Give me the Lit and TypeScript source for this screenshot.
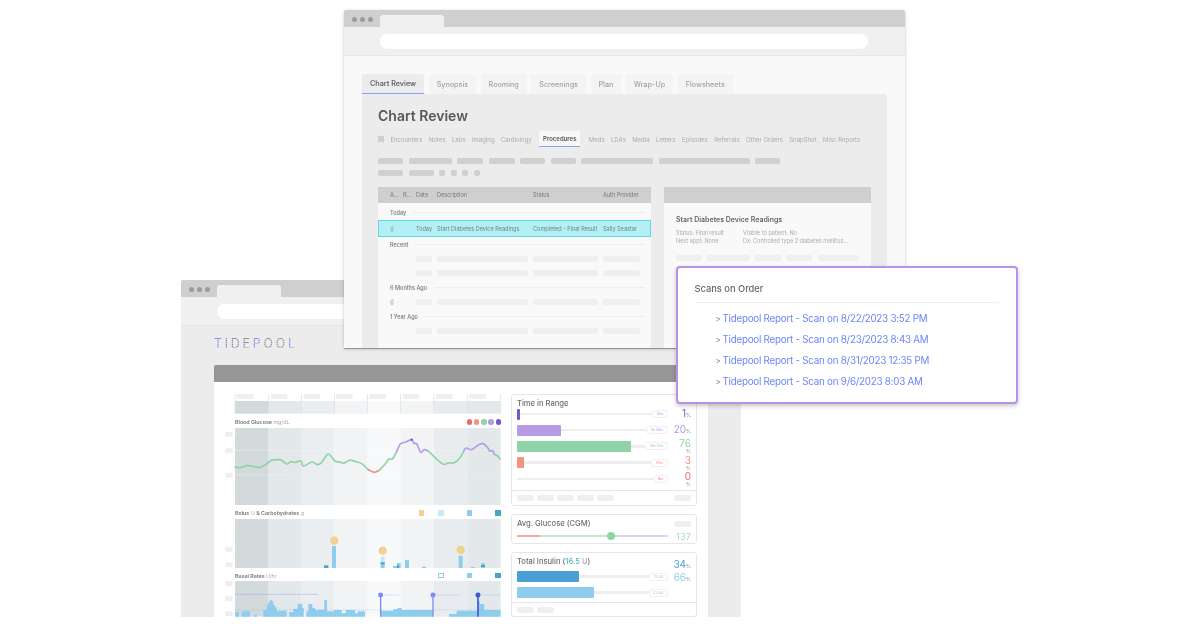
import { LitElement, html, css, svg } from 'lit';
import { customElement } from 'lit/decorators.js';

type Pt = [number, number];
type Pt3 = [number, number, number];

// chart svgs use the same units throughout: 3 units per screen pixel
const COLS = [60, 161, 260, 359, 458, 557, 657, 757, 857];
const SHADES = ['#d3dadc', '#e3e8eb', '#ebeef1', '#f1f3f5', '#f8f9fb', '#f1f3f5', '#e8ecef', '#e3e8eb'];

const GLUCOSE: { color: string; pts: Pt[] }[] = [
  {
    color: '#8fd4a8',
    pts: [[60, 246], [75, 248], [95, 242], [115, 244], [135, 247], [150, 240], [170, 226], [190, 224], [200, 226], [215, 237], [228, 230], [240, 232], [258, 228], [264, 243], [280, 236], [292, 231], [308, 239], [320, 232], [338, 208], [350, 216], [360, 228], [378, 232], [388, 234], [405, 225], [420, 229], [440, 236], [460, 254]],
  },
  { color: '#f4917f', pts: [[460, 254], [478, 262], [494, 255]] },
  { color: '#8fd4a8', pts: [[494, 255], [510, 238], [522, 222], [532, 222], [545, 200]] },
  { color: '#b79be5', pts: [[545, 200], [556, 177], [570, 172], [590, 164], [596, 174], [606, 178], [617, 202], [628, 194], [640, 198]] },
  { color: '#8fd4a8', pts: [[640, 198], [665, 222], [685, 238], [700, 234], [718, 233], [735, 218], [748, 195]] },
  { color: '#b79be5', pts: [[748, 195], [754, 189], [770, 194], [790, 180], [803, 176], [815, 184], [825, 198], [833, 197], [838, 208]] },
  { color: '#8fd4a8', pts: [[838, 208], [848, 213], [855, 222]] },
];

// x, y, w, h, colour
const BOLUS: [number, number, number, number, string][] = [
  [327, 181, 13, 8, '#48a9bd'],
  [351, 123, 12, 66, '#8fcdee'],
  [497, 155, 12, 17, '#c5ecf6'],
  [497, 172, 12, 17, '#8fcdee'],
  [497, 172, 12, 6, '#48a9bd'],
  [534, 183, 12, 6, '#8fcdee'],
  [546, 174, 11, 15, '#8fcdee'],
  [546, 180, 6, 9, '#48a9bd'],
  [570, 165, 12, 24, '#8fcdee'],
  [621, 185, 12, 4, '#8fcdee'],
  [731, 152, 12, 37, '#8fcdee'],
  [768, 186, 12, 3, '#8fcdee'],
  [798, 174, 12, 15, '#8fcdee'],
  [798, 180, 12, 6, '#48a9bd'],
];

// x start, x end, top of the basal step
const BASAL: Pt3[] = [
  [60, 72, 323], [80, 105, 320], [118, 126, 330], [145, 155, 316], [155, 160, 300], [160, 165, 292], [165, 170, 285], [170, 175, 290], [175, 180, 300], [180, 185, 308], [185, 215, 318],
  [222, 235, 322], [235, 248, 312], [248, 262, 297], [262, 266, 310], [274, 280, 320], [280, 292, 298], [292, 300, 310], [300, 328, 315], [328, 336, 286], [336, 358, 320],
  [358, 380, 316], [380, 392, 326], [392, 420, 316], [420, 428, 326], [428, 450, 320],
  [497, 535, 318], [535, 548, 314], [548, 560, 310], [560, 654, 316],
  [702, 725, 328], [725, 789, 318], [789, 795, 290], [795, 808, 298], [808, 857, 316],
];

const smooth = (p: Pt[]) => {
  let d = `M${p[0][0]} ${p[0][1]}`;
  for (let i = 0; i < p.length - 1; i++) {
    const a = p[Math.max(i - 1, 0)];
    const b = p[i];
    const c = p[i + 1];
    const e = p[Math.min(i + 2, p.length - 1)];
    d += `C${b[0] + (c[0] - a[0]) / 6} ${b[1] + (c[1] - a[1]) / 6} ${c[0] - (e[0] - b[0]) / 6} ${c[1] - (e[1] - b[1]) / 6} ${c[0]} ${c[1]}`;
  }
  return d;
};

// one path, so neighbouring steps don't leave hairline seams
const basalPath = () => {
  let d = '';
  let lastEnd = -1;
  BASAL.forEach(([a, b, y]) => {
    if (a !== lastEnd) d += `${lastEnd < 0 ? '' : `V336Z`}M${a} 336`;
    d += `V${y}H${b}`;
    lastEnd = b;
  });
  return d + 'V336Z';
};

const shades = (y: number, h: number) =>
  SHADES.map((fill, i) => svg`<rect x=${COLS[i]} y=${y} width=${COLS[i + 1] - COLS[i]} height=${h} fill=${fill} />`);

const axis = (ys: number[]) =>
  ys.map(y => svg`<rect x="30" y=${y} width="23" height="15" rx="3" fill="#efefef" />`);

const TIME_ROWS = [
  { fill: 3, color: '#7a55c9', pill: '10m', pillColor: '#b79be5', value: '1', valueColor: '#7a55c9', wrap: false },
  { fill: 44, color: '#b79be5', pill: '4h 50m', pillColor: '#b79be5', value: '20', valueColor: '#b79be5', wrap: false },
  { fill: 114, color: '#8fd4a8', pill: '18h 15m', pillColor: '#8fd4a8', value: '76', valueColor: '#8fd4a8', wrap: true },
  { fill: 7, color: '#f4917f', pill: '45m', pillColor: '#f4917f', value: '3', valueColor: '#f4917f', wrap: true },
  { fill: 0, color: '#f06a6a', pill: '0m', pillColor: '#f06a6a', value: '0', valueColor: '#f06a6a', wrap: true },
];

const TABS = ['Chart Review', 'Synopsis', 'Rooming', 'Screenings', 'Plan', 'Wrap-Up', 'Flowsheets'];
const SUBTABS = ['Encounters', 'Notes', 'Labs', 'Imaging', 'Cardiology', 'Procedures', 'Meds', 'LDAs', 'Media', 'Letters', 'Episodes', 'Referrals', 'Other Orders', 'SnapShot', 'Misc Reports'];
const SCANS = ['8/22/2023 3:52 PM', '8/23/2023 8:43 AM', '8/31/2023 12:35 PM', '9/6/2023 8:03 AM'];
const LOGO: [string, string][] = [['T', 'b'], ['I', 'g'], ['D', 'g'], ['E', 'g'], ['P', 'b'], ['O', 'g'], ['O', 'g'], ['L', 'b']];

@customElement('app-root')
export class AppRoot extends LitElement {
  private chrome() {
    return html`
      <div class="titlebar">
        <span class="dots"><i></i><i></i><i></i></span>
        <span class="wintab"></span>
      </div>
      <div class="addressbar"><span class="pill"></span></div>
    `;
  }

  private skeletons(widths: number[]) {
    return widths.map(w => html`<span class="sk" style="width:${w}px"></span>`);
  }

  private clip() {
    return html`<svg class="clip" viewBox="0 0 4 6" width="4" height="6">
      <path d="M1 1.6v2.9a1 1 0 0 0 2 0V1.4a.8.8 0 0 0-1.6 0" fill="none" stroke="#8a9599" stroke-width=".6" />
    </svg>`;
  }

  private skRow(clip = false) {
    return html`<div class="trow">
      <span class="c1">${clip ? this.clip() : ''}</span><span></span>
      <span class="sk light"></span><span class="sk light"></span><span class="sk light"></span><span class="sk light"></span>
    </div>`;
  }

  private frontWindow() {
    return html`
      <section class="win front">
        ${this.chrome()}
        <div class="front-body">
          <nav class="tabs">
            ${TABS.map((t, i) => html`<span class="tab ${i === 0 ? 'on' : ''}">${t}</span>`)}
          </nav>
          <div class="panel">
            <h1>Chart Review</h1>
            <div class="subtabs">
              <svg class="bookmark" viewBox="0 0 6 7" width="6" height="7"><path d="M0 0h6v7L3 5.2 0 7z" fill="#cfcfcf" /></svg>
              ${SUBTABS.map(t => html`<span class="subtab ${t === 'Procedures' ? 'on' : ''}">${t}</span>`)}
            </div>
            <div class="skrow">${this.skeletons([25, 43, 26, 26, 25, 25, 72, 91, 25])}</div>
            <div class="skrow second">
              ${this.skeletons([25, 25])}
              <span class="sk dot"></span><span class="sk dot"></span><span class="sk dot"></span><span class="sk dot"></span>
            </div>
            <div class="split">
              <div class="table">
                <div class="thead trow">
                  <span>A...</span><span>R...</span><span>Date</span><span>Description</span><span>Status</span><span>Auth Provider</span>
                </div>
                <div class="tbody">
                  <div class="group">Today</div>
                  <div class="trow selected">
                    <span class="c1">${this.clip()}</span><span></span>
                    <span>Today</span><span>Start Diabetes Device Readings</span><span>Completed - Final Result</span><span>Sally Seastar</span>
                  </div>
                  <div class="group">Recent</div>
                  ${this.skRow()} ${this.skRow()}
                  <div class="group">6 Months Ago</div>
                  ${this.skRow(true)}
                  <div class="group">1 Year Ago</div>
                  ${this.skRow()}
                </div>
              </div>
              <aside class="detail">
                <div class="detail-head"></div>
                <div class="detail-body">
                  <h2>Start Diabetes Device Readings</h2>
                  <div class="facts">
                    <span>Status: Final result</span><span>Visible to patient: No</span>
                    <span>Next appt: None</span><span>Dx: Controlled type 2 diabetes mellitus...</span>
                  </div>
                  <div class="skrow">${this.skeletons([26, 43, 26, 26, 42])}</div>
                </div>
              </aside>
            </div>
          </div>
        </div>
      </section>
    `;
  }

  private glucoseChart() {
    return html`<svg class="chart" viewBox="30 129 827 232" width="275.67" height="77.33">
      ${shades(129, 232)}
      ${axis([140, 190, 263])}
      <line x1="60" x2="857" y1="196" y2="196" stroke="#fff" stroke-width="1.5" stroke-dasharray="3 3" />
      <line x1="60" x2="857" y1="270" y2="270" stroke="#fff" stroke-width="1.5" stroke-dasharray="3 3" />
      ${GLUCOSE.map(s => svg`<path d=${smooth(s.pts)} fill="none" stroke=${s.color} stroke-width="5" stroke-linecap="round" />`)}
      <circle cx="590" cy="164" r="3.5" fill="#7a55c9" />
    </svg>`;
  }

  private bolusChart() {
    return html`<svg class="chart" viewBox="30 42 827 147" width="275.67" height="49">
      ${shades(42, 147)}
      ${axis([125, 172])}
      ${BOLUS.map(([x, y, w, h, fill]) => svg`<rect x=${x} y=${y} width=${w} height=${h} fill=${fill} />`)}
      ${[[358, 107], [503, 137], [737, 135]].map(([cx, cy]) => svg`<circle cx=${cx} cy=${cy} r="12.5" fill="#f2d08f" />`)}
    </svg>`;
  }

  private basalChart() {
    const markers = [
      { x: 497, end: 553, color: '#7b8ff5', w: 4 },
      { x: 654, end: 737, color: '#7b8ff5', w: 4 },
      { x: 789, end: 857, color: '#4457d6', w: 5 },
    ];
    return html`<svg class="chart" viewBox="30 229 827 107" width="275.67" height="35.67">
      ${shades(229, 107)}
      ${axis([229, 275, 320])}
      <path d=${basalPath()} fill="#8fcdee" />
      <line x1="60" x2="857" y1="316" y2="316" stroke="#7fb7d8" stroke-width="1.5" stroke-dasharray="3 3" />
      <line x1="60" x2="310" y1="269" y2="269" stroke="#8f9ce8" stroke-width="2" stroke-dasharray="3 2" />
      ${markers.map(
        m => svg`
          <line x1=${m.x} x2=${m.end} y1="271" y2="271" stroke="#a9b5f5" stroke-width="2" stroke-dasharray="3 2" />
          <line x1=${m.x} x2=${m.x} y1="271" y2="336" stroke=${m.color} stroke-width=${m.w} />
          <circle cx=${m.x} cy="271" r="7.5" fill=${m.color} />
        `,
      )}
    </svg>`;
  }

  private charts() {
    return html`
      <div class="charts">
        <svg class="chart" viewBox="30 29 827 59" width="275.67" height="19.67">
          ${shades(50, 38)}
          ${[65, 167, 266, 363, 463, 563, 663, 763].map(x => svg`<rect x=${x} y="29" width="50" height="15" rx="3" fill="#efefef" />`)}
          ${COLS.map(x => svg`<rect x=${x - 1} y="29" width="2" height="59" fill="#d9dee1" />`)}
        </svg>
        <div class="chart-label l-glucose">
          <span><b>Blood Glucose</b> mg/dL</span>
          <span class="legend dots-legend"><i class="c-a"></i><i class="c-b"></i><i class="c-c"></i><i class="c-d"></i><i class="c-e"></i></span>
        </div>
        ${this.glucoseChart()}
        <div class="chart-label l-bolus">
          <span><b>Bolus</b> U <b>&amp; Carbohydrates</b> g</span>
          <span class="legend squares">
            <i class="s-carb"></i><i class="s-light gap-a"></i><i class="s-blue gap-b"></i><i class="s-teal gap-b"></i>
          </span>
        </div>
        ${this.bolusChart()}
        <div class="chart-label l-basal">
          <span><b>Basal Rates</b> U/hr</span>
          <span class="legend squares">
            <i class="s-dash"></i><i class="s-blue gap-b"></i><i class="s-teal gap-b"></i>
          </span>
        </div>
        ${this.basalChart()}
      </div>
    `;
  }

  private cards() {
    return html`
      <div class="cards">
        <div class="card">
          <div class="card-main time">
            <div class="card-title">Time in Range</div>
            ${TIME_ROWS.map(
              r => html`<div class="range-row">
                <div class="track">
                  ${r.fill ? html`<span class="fill" style="width:${r.fill}px;background:${r.color}"></span>` : ''}
                  <span class="line"></span>
                  <span class="tag" style="color:${r.pillColor}">${r.pill}</span>
                </div>
                <div class="val" style="color:${r.valueColor}">${r.value}<small class=${r.wrap ? 'wrap' : ''}>%</small></div>
              </div>`,
            )}
          </div>
          <div class="card-foot">
            ${this.skeletons([17, 17, 17, 17, 17])}
            <span class="sk end"></span>
          </div>
        </div>

        <div class="card avg">
          <div class="avg-top">
            <div class="card-title">Avg. Glucose (CGM)</div>
            <span class="sk"></span>
          </div>
          <div class="avg-bottom">
            <div class="slider">
              <span class="seg red"></span><span class="seg green"></span><i class="thumb"></i><span class="seg green short"></span><span class="seg purple"></span>
            </div>
            <div class="val avg-val">137</div>
          </div>
        </div>

        <div class="card insulin">
          <div class="card-main ins">
            <div class="ins-left">
              <div class="card-title">Total Insulin (<em>16.5</em> <span>U</span>)</div>
              <div class="track ins-track">
                <span class="fill basal" style="width:62px"></span><span class="line"></span><span class="tag blue">12.4U</span>
              </div>
              <div class="track ins-track">
                <span class="fill bolus" style="width:77px"></span><span class="line"></span><span class="tag blue">23.8U</span>
              </div>
            </div>
            <div class="ins-vals">
              <div class="val v-a">34<small>%</small></div>
              <div class="val v-b">66<small>%</small></div>
            </div>
          </div>
          <div class="card-foot">${this.skeletons([17, 17])}</div>
        </div>
      </div>
    `;
  }

  private backWindow() {
    return html`
      <section class="win back">
        ${this.chrome()}
        <div class="back-body">
          <div class="logo">${LOGO.map(([l, c]) => html`<span class=${c}>${l}</span>`)}</div>
          <div class="report">
            <div class="report-head"></div>
            <div class="report-body">${this.charts()} ${this.cards()}</div>
          </div>
        </div>
      </section>
    `;
  }

  render() {
    return html`
      <main class="canvas">
        ${this.backWindow()} ${this.frontWindow()}
        <div class="popup">
          <div class="popup-title">Scans on Order</div>
          <ul>
            ${SCANS.map(s => html`<li><span class="gt">&gt;</span><a>Tidepool Report - Scan on ${s}</a></li>`)}
          </ul>
        </div>
      </main>
    `;
  }

  static styles = css`
    :host {
      display: block;
      width: 1200px;
      height: 627px;
      overflow: hidden;
      background: #fff;
      font-family: Inter, 'Liberation Sans', sans-serif;
    }
    .canvas {
      position: relative;
      width: 1200px;
      height: 627px;
      overflow: hidden;
      background: #fff;
      filter: blur(0.5px);
    }
    .win {
      position: absolute;
      display: flex;
      flex-direction: column;
      border-radius: 2px 2px 0 0;
      overflow: hidden;
    }
    .front {
      left: 344px;
      top: 10px;
      width: 561px;
      height: 338px;
      background: #f9f9f9;
      box-shadow: 0 1px 1px rgba(0, 0, 0, 0.35), 0 1px 4px rgba(0, 0, 0, 0.15);
    }
    .back {
      left: 181px;
      top: 280px;
      width: 560px;
      height: 337px;
      background: #ececec;
    }
    .titlebar {
      flex: none;
      height: 17px;
      background: #cfcfcf;
      display: flex;
      align-items: flex-end;
      padding-left: 36px;
      position: relative;
    }
    .dots {
      position: absolute;
      left: 8px;
      top: 7px;
      display: flex;
      gap: 3px;
    }
    .dots i {
      width: 5px;
      height: 5px;
      border-radius: 50%;
      background: #9c9c9c;
    }
    .wintab {
      width: 64px;
      height: 12px;
      background: #f0f0f0;
      border-radius: 3px 3px 0 0;
    }
    .addressbar {
      flex: none;
      height: 29px;
      padding: 7px 37px 0 36px;
      box-sizing: border-box;
      background: #f0f0f0;
      border-bottom: 1px solid #e6e6e6;
    }
    .addressbar .pill {
      display: block;
      height: 15px;
      border-radius: 8px;
      background: #fff;
    }

    /* front window */
    .front-body {
      flex: 1;
      padding: 18px 18px 0;
      display: flex;
      flex-direction: column;
      min-height: 0;
    }
    .tabs {
      display: flex;
      gap: 4.5px;
      height: 20px;
      flex: none;
    }
    .tab {
      display: flex;
      align-items: center;
      padding: 0 8px;
      background: #f4f4f4;
      color: #a4a4a4;
      font-size: 7.2px;
      font-weight: 500;
      border-radius: 2px 2px 0 0;
    }
    .tab.on {
      background: #ececec;
      color: #666;
      font-weight: 600;
      box-sizing: border-box;
      border-bottom: 1px solid #8fa0f0;
    }
    .panel {
      flex: 1;
      background: #ececec;
      padding: 0 16px;
      min-height: 0;
      border-radius: 0 2px 0 0;
    }
    h1 {
      margin: 13px 0 0;
      font-size: 14px;
      line-height: 17px;
      font-weight: 600;
      color: #595959;
    }
    .subtabs {
      display: flex;
      align-items: center;
      height: 16px;
      margin-top: 7px;
      font-size: 6px;
      color: #ababab;
      gap: 6.4px;
    }
    .bookmark {
      flex: none;
    }
    .subtab.on {
      align-self: stretch;
      display: flex;
      align-items: center;
      padding: 0 4px;
      margin: 0 2px 0 1px;
      background: #f7f7f7;
      color: #555;
      font-weight: 600;
      border-bottom: 1px solid #8fa0f0;
    }
    .skrow {
      display: flex;
      gap: 5.5px;
      margin-top: 11px;
    }
    .skrow.second {
      margin-top: 6px;
    }
    .sk {
      display: block;
      height: 6px;
      border-radius: 2px;
      background: #d0d0d0;
    }
    .sk.dot {
      width: 6px;
    }
    .sk.light {
      background: #efefef;
    }
    .split {
      display: flex;
      gap: 13px;
      margin-top: 11px;
    }
    .table {
      width: 273px;
      height: 161px;
      background: #f9f9f9;
      font-size: 5.55px;
      color: #7c7c7c;
    }
    .trow {
      display: grid;
      grid-template-columns: 13px 13px 21px 96px 70px 37px;
      align-items: center;
      padding-left: 12px;
      height: 14px;
    }
    .trow .sk {
      width: calc(100% - 5px);
    }
    .trow .sk:last-child {
      width: 100%;
    }
    .thead {
      height: 16px;
      background: #cfcfcf;
      color: #777;
    }
    .thead span:last-child {
      white-space: nowrap;
    }
    .tbody {
      padding-top: 2px;
    }
    .group {
      display: flex;
      align-items: center;
      gap: 7px;
      height: 15px;
      margin: 0 6px 0 12px;
      color: #777;
      white-space: nowrap;
      font-weight: 500;
    }
    .group::after {
      content: '';
      flex: 1;
      height: 1px;
      background: #ededed;
    }
    .selected {
      height: 17px;
      box-sizing: border-box;
      background: #b3f0f5;
      border: 1px solid #5fd8e8;
      padding-left: 11px;
      color: #6f8288;
      white-space: nowrap;
    }
    .c1 {
      display: flex;
    }
    .detail {
      width: 207px;
      height: 161px;
      background: #f9f9f9;
    }
    .detail-head {
      height: 16px;
      background: #cfcfcf;
    }
    .detail-body {
      padding: 12px 12px 0;
    }
    h2 {
      margin: 0;
      font-size: 7px;
      line-height: 9px;
      font-weight: 600;
      color: #666;
    }
    .facts {
      display: grid;
      grid-template-columns: 67px auto;
      margin-top: 5px;
      font-size: 5.5px;
      line-height: 8px;
      color: #adadad;
      white-space: nowrap;
    }
    .detail-body .skrow {
      margin-top: 9.5px;
    }
    .detail-body .sk {
      background: #efefef;
    }

    /* back window */
    .back-body {
      flex: 1;
      padding: 12px 33px 0;
      display: flex;
      flex-direction: column;
      min-height: 0;
    }
    .logo {
      display: flex;
      justify-content: space-between;
      width: 81px;
      height: 12px;
      align-items: center;
      font-size: 12.4px;
      line-height: 12px;
      font-weight: 400;
      flex: none;
      -webkit-mask-image: repeating-linear-gradient(to bottom, #000 0 1px, rgba(0, 0, 0, 0.45) 1px 2px);
      mask-image: repeating-linear-gradient(to bottom, #000 0 1px, rgba(0, 0, 0, 0.45) 1px 2px);
    }
    .logo .b {
      color: #7f94ef;
    }
    .logo .g {
      color: #8b8f9e;
    }
    .report {
      margin-top: 15px;
      flex: 1;
      display: flex;
      flex-direction: column;
      min-height: 0;
    }
    .report-head {
      flex: none;
      height: 17px;
      background: #969696;
      border-radius: 2px 2px 0 0;
    }
    .report-body {
      flex: 1;
      min-height: 0;
      background: #fff;
      display: flex;
      padding: 12px 11px 0;
      overflow: hidden;
    }
    .charts {
      width: 276px;
      flex: none;
      margin-right: 10px;
    }
    .chart {
      display: block;
    }
    .chart-label {
      display: flex;
      justify-content: space-between;
      align-items: center;
      box-sizing: border-box;
      padding-top: 2px;
      margin-left: 10px;
      font-size: 5.3px;
      color: #aaa;
      white-space: nowrap;
    }
    .l-glucose {
      height: 14.33px;
    }
    .l-bolus {
      height: 13.67px;
    }
    .l-basal {
      height: 13.33px;
    }
    .chart-label b {
      color: #777;
      font-weight: 600;
    }
    .legend {
      display: flex;
      align-items: center;
    }
    .dots-legend {
      gap: 1.8px;
    }
    .dots-legend i {
      width: 5.4px;
      height: 5.4px;
      border-radius: 50%;
    }
    .c-a { background: #f06a6a; }
    .c-b { background: #f4917f; }
    .c-c { background: #8fd4a8; }
    .c-d { background: #b79be5; }
    .c-e { background: #7a55c9; }
    .squares i {
      width: 5.3px;
      height: 5.3px;
      margin-right: 0.3px;
    }
    .gap-a { margin-left: 13.5px; }
    .gap-b { margin-left: 23px; }
    .s-carb { background: #f4d08f; }
    .s-light { background: #c5ecf6; }
    .s-blue { background: #8fcdee; }
    .s-teal { background: #48a9bd; }
    .s-dash {
      box-sizing: border-box;
      border: 1px dashed #8fcdee;
    }

    /* summary cards */
    .cards {
      width: 186px;
      flex: none;
      display: flex;
      flex-direction: column;
      gap: 8px;
    }
    .card {
      box-sizing: border-box;
      border: 1px solid #e4e7ea;
      border-radius: 3px;
      background: #fff;
      flex: none;
    }
    .card-main {
      padding: 0 5px;
    }
    .card-main.time {
      height: 95px;
      padding-top: 3.5px;
      box-sizing: border-box;
    }
    .card-main.time .card-title {
      margin-bottom: -1.6px;
    }
    .card-title {
      font-size: 7.6px;
      line-height: 9px;
      font-weight: 500;
      color: #6d6d6d;
      white-space: nowrap;
    }
    .card-title em {
      font-style: normal;
      color: #4fb3cf;
    }
    .card-title span {
      color: #aaa;
    }
    .range-row {
      display: flex;
      height: 16.2px;
      align-items: center;
    }
    .track {
      width: 151px;
      display: flex;
      align-items: center;
      flex: none;
    }
    .fill {
      height: 11px;
      flex: none;
      border-radius: 1px;
    }
    .line {
      flex: 1;
      height: 2.5px;
      background: #eee;
    }
    .tag {
      flex: none;
      padding: 0 3.5px;
      height: 6px;
      line-height: 6px;
      border: 0.5px solid #f0f0f0;
      border-radius: 3px;
      font-size: 3.6px;
      background: #fff;
      white-space: nowrap;
    }
    .tag.blue {
      color: #8fcdee;
    }
    .val {
      flex: 1;
      text-align: right;
      font-size: 10px;
      line-height: 9px;
      font-weight: 400;
    }
    .val small {
      font-size: 5px;
      color: #888;
    }
    .val small.wrap {
      display: block;
      line-height: 6px;
    }
    .range-row .val {
      padding-top: 1px;
    }
    .card-foot {
      display: flex;
      align-items: center;
      gap: 3px;
      height: 15px;
      padding: 0 5px;
      border-top: 1px solid #e4e7ea;
      box-sizing: border-box;
    }
    .card-foot .sk {
      background: #efefef;
    }
    .card-foot .sk.end {
      width: 17px;
      margin-left: auto;
    }
    .avg {
      height: 30px;
      padding: 4px 5px 0;
    }
    .avg-top {
      display: flex;
      justify-content: space-between;
      align-items: center;
      height: 9px;
    }
    .avg-top .sk {
      width: 17px;
      background: #efefef;
    }
    .avg-bottom {
      display: flex;
      align-items: center;
      height: 12px;
      margin-top: 2px;
    }
    .slider {
      width: 151px;
      flex: none;
      display: flex;
      align-items: center;
    }
    .seg {
      height: 2.5px;
    }
    .seg.red {
      width: 23px;
      background: #f6aca0;
    }
    .seg.green {
      width: 67px;
      background: #c4e8d0;
    }
    .seg.green.short {
      width: 3px;
    }
    .seg.purple {
      flex: 1;
      background: #dfd0f5;
    }
    .thumb {
      flex: none;
      width: 8px;
      height: 8px;
      border-radius: 50%;
      background: #8fd4a8;
    }
    .avg-val {
      color: #a8ddb8;
      font-size: 9.4px;
    }
    .insulin {
      height: 65px;
    }
    .card-main.ins {
      display: flex;
      height: 49px;
      box-sizing: border-box;
      padding-top: 4px;
    }
    .ins-left {
      width: 151px;
      flex: none;
    }
    .ins-track {
      margin-top: 5px;
    }
    .fill.basal {
      background: #4a9fd6;
    }
    .fill.bolus {
      background: #8fcdee;
    }
    .ins-vals {
      flex: 1;
      padding-top: 3px;
    }
    .ins-vals .val {
      height: 13px;
    }
    .v-a {
      color: #4a9fd6;
    }
    .v-b {
      color: #8fcdee;
    }

    /* popup */
    .popup {
      position: absolute;
      left: 676px;
      top: 266px;
      width: 342px;
      height: 138px;
      box-sizing: border-box;
      padding: 13.5px 17px 0 16.5px;
      background: #fff;
      border: 2px solid #b392e8;
      border-radius: 4px;
      box-shadow: 0 2px 4px rgba(0, 0, 0, 0.22);
    }
    .popup-title {
      font-size: 9.3px;
      line-height: 14px;
      font-weight: 500;
      color: #666;
      padding-bottom: 6px;
      border-bottom: 1px solid #efefef;
    }
    ul {
      list-style: none;
      margin: 6px 0 0;
      padding: 0 0 0 21px;
    }
    li {
      display: flex;
      align-items: center;
      height: 20.9px;
      font-size: 9.8px;
      letter-spacing: -0.24px;
      white-space: nowrap;
    }
    .gt {
      width: 7px;
      color: #777;
      font-size: 8px;
    }
    a {
      color: #6b86f7;
    }
  `;
}

declare global {
  interface HTMLElementTagNameMap {
    'app-root': AppRoot;
  }
}
